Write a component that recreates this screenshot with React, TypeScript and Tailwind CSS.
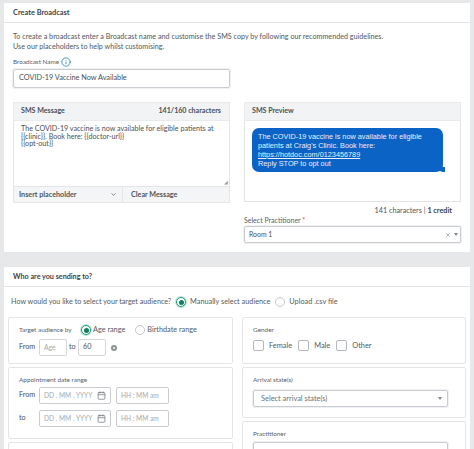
import { Info, ChevronDown, Calendar, X } from "lucide-react";

const Radio = ({ on, label, gap = "gap-[4px]" }: { on?: boolean; label: string; gap?: string }) => (
  <div className={`flex items-center ${gap}`}>
    <span
      className={`flex h-[10px] w-[10px] items-center justify-center rounded-full border bg-white ${
        on ? "border-[#1f9d7a] ring-1 ring-[#bfe3d8]" : "border-[#c4c8cc]"
      }`}
    >
      {on && <span className="h-[5px] w-[5px] rounded-full bg-[#0f7f5f]"></span>}
    </span>
    <span className="whitespace-nowrap text-[7.3px] text-[#555b61]">{label}</span>
  </div>
);

const Check = ({ label }: { label: string }) => (
  <div className="flex items-center gap-[5px]">
    <span className="h-[11px] w-[11px] rounded-[2px] border border-[#b4b8bc] bg-white"></span>
    <span className="text-[7.4px] text-[#555b61]">{label}</span>
  </div>
);

const DateRow = ({ label }: { label: string }) => (
  <div className="flex items-center">
    <span className="w-[20px] text-[7.2px] text-[#4a5056]">{label}</span>
    <div className="flex h-[17px] w-[72px] items-center justify-between rounded-[2px] border border-[#c8ccd0] pl-[4px] pr-[4px] text-[6.6px] whitespace-nowrap text-[#a4a9ae]">
      DD . MM . YYYY
      <Calendar size={9} className="shrink-0 text-[#777c81]" />
    </div>
    <div className="ml-[5px] flex h-[17px] w-[53px] items-center rounded-[2px] border border-[#c8ccd0] pl-[4px] text-[6.6px] whitespace-nowrap text-[#a4a9ae]">
      HH : MM am
    </div>
  </div>
);

export default function App() {
  return (
    <div className="h-[449px] w-[474px] overflow-hidden bg-[#e6e8ea] pl-[4px] pr-[4px] pt-[3px] font-['Lato',sans-serif] text-[7.2px] text-[#4a5056]">
      <div className="h-[249px] bg-white">
        <div className="flex h-[20px] items-center border-b border-[#e3e5e7] pl-[9px] pt-[1px] text-[7.4px] font-bold text-[#3d4349]">
          Create Broadcast
        </div>
        <div className="pl-[9px] pr-[9px] pt-[9px]">
          <p className="leading-[9.5px] text-[#51575d]">
            To create a broadcast enter a Broadcast name and customise the SMS copy by following our recommended guidelines.
            <br />
            Use our placeholders to help whilst customising.
          </p>
          <div className="mt-[6px] flex h-[10px] items-center gap-[2px] text-[6.4px] text-[#5a6066]">
            Broadcast Name
            <Info size={10} className="text-[#2f7fc1]" />
          </div>
          <div className="mt-[2px] flex h-[19px] w-[217px] items-center rounded-[2px] border border-[#c8ccd0] pl-[5px] text-[7.3px] text-[#4a5056] shadow-[0_0_0_1px_#eef0f1]">
            COVID-19 Vaccine Now Available
          </div>
          <div className="mt-[14px] flex gap-[14px]">
            <div className="w-[217px]">
              <div className="flex h-[19px] items-center justify-between border border-[#e8eaeb] bg-[#f2f3f4] pl-[7px] pr-[8px] text-[7.1px] font-bold text-[#4a5056]">
                <span>SMS Message</span>
                <span>141/160 characters</span>
              </div>
              <div className="relative h-[65px] border-l border-r border-[#e3e5e7] pl-[7px] pr-[8px] pt-[4px] text-[7.15px] leading-[7.5px] text-[#4a5056]">
                The COVID-19 vaccine is now available for eligible patients at
                <br />
                {"{{clinic}}. Book here: {{doctor-url}}"}
                <br />
                {"{{opt-out}}"}
                <span className="absolute bottom-[1px] right-[1px] text-[5px] leading-none text-[#9a9ea3]">◢</span>
              </div>
              <div className="flex h-[17px] items-center border border-[#e3e5e7] bg-[#f4f5f6] text-[7.2px] font-bold text-[#4f555b]">
                <div className="flex w-[109px] items-center justify-between border-r border-[#e3e5e7] pl-[5px] pr-[5px] leading-[15px]">
                  Insert placeholder
                  <ChevronDown size={7} strokeWidth={3} className="text-[#7a7f84]" />
                </div>
                <span className="pl-[8px] leading-[15px]">Clear Message</span>
              </div>
            </div>
            <div className="w-[217px]">
              <div className="flex h-[19px] items-center border border-[#e8eaeb] bg-[#f2f3f4] pl-[7px] text-[7.1px] font-bold text-[#4a5056]">
                SMS Preview
              </div>
              <div className="h-[81px] border-b border-l border-r border-[#e3e5e7] pl-[7px] pt-[7px]">
                <div className="relative h-[44px] w-[191px] rounded-[7px] bg-[#0b63c5] pl-[6px] pt-[4px] font-['Liberation_Sans',sans-serif] text-[7.3px] leading-[9px] text-[#e8f0fa]">
                  The COVID-19 vaccine is now available for eligible
                  <br />
                  patients at Craig's Clinic. Book here:
                  <br />
                  <span className="underline">https://hotdoc.com/0123456789</span>
                  <br />
                  Reply STOP to opt out
                  <span className="absolute bottom-0 right-[-2px] h-[5px] w-[7px] rounded-bl-[5px] bg-[#0b63c5]"></span>
                </div>
              </div>
              <div className="mt-[4px] pr-[9px] text-right text-[7.25px] leading-[10px] text-[#51575d]">
                141 characters | <b className="font-bold text-[#3d4349]">1 credit</b>
              </div>
              <div className="text-[7px] leading-[9px] text-[#5a6066]">
                Select Practitioner <span className="text-[#d9534f]">*</span>
              </div>
              <div className="mt-[1px] flex h-[17px] items-center justify-between rounded-[2px] border border-[#c8ccd0] pl-[4px] pr-[2px] text-[6.9px] text-[#4a5056] shadow-[0_0_0_1px_#eef0f1]">
                Room 1
                <span className="flex items-center gap-[3px] text-[#80858a]">
                  <X size={6} strokeWidth={2.5} />
                  <span className="h-0 w-0 border-x-[2px] border-t-[3px] border-x-transparent border-t-[#80858a]"></span>
                </span>
              </div>
            </div>
          </div>
        </div>
      </div>

      <div className="mt-[15px] bg-white">
        <div className="flex h-[20px] items-center border-b border-[#e3e5e7] pl-[9px] pt-[1px] text-[7.2px] font-bold text-[#3d4349]">
          Who are you sending to?
        </div>
        <div className="flex h-[30px] items-center gap-[5px] pl-[7px] text-[7.2px] text-[#555b61]">
          How would you like to select your target audience?
          <Radio on label="Manually select audience" />
          <Radio label="Upload .csv file" />
        </div>
        <div className="flex gap-[9px] pl-[4px]">
          <div className="flex w-[225px] flex-col gap-[3px]">
            <div className="h-[47px] rounded-[2px] border border-[#e3e5e7] pl-[10px] pt-[6px]">
              <div className="flex h-[12px] items-center">
                <span className="w-[62px] text-[6.4px] text-[#5a6066]">Target audience by</span>
                <Radio on gap="gap-[2px]" label="Age range" />
                <span className="w-[10px]"></span>
                <Radio gap="gap-[2px]" label="Birthdate range" />
              </div>
              <div className="mt-[3px] flex items-center">
                <span className="w-[20px] text-[7.2px] text-[#4a5056]">From</span>
                <span className="flex h-[17px] w-[28px] items-center rounded-[2px] border border-[#d5d8db] pl-[4px] text-[6.8px] text-[#a4a9ae]">
                  Age
                </span>
                <span className="ml-[2px] w-[9px] text-[7.2px]">to</span>
                <span className="flex h-[17px] w-[28px] items-center rounded-[2px] border border-[#d5d8db] pl-[4px] text-[7.2px] text-[#4a5056]">
                  60
                </span>
                <span className="ml-[5px] flex h-[6px] w-[6px] items-center justify-center rounded-full bg-[#8e9398]">
                  <span className="h-[2px] w-[2px] rounded-full bg-white"></span>
                </span>
              </div>
            </div>
            <div className="h-[72px] rounded-[2px] border border-[#e3e5e7] pl-[10px] pt-[7px]">
              <div className="text-[6.4px] leading-[10px] text-[#5a6066]">Appointment date range</div>
              <div className="mt-[2px] flex flex-col gap-[6px]">
                <DateRow label="From" />
                <DateRow label="to" />
              </div>
            </div>
            <div className="h-[30px] rounded-[2px] border border-[#e3e5e7]"></div>
          </div>
          <div className="flex w-[224px] flex-col gap-[3px]">
            <div className="h-[47px] rounded-[2px] border border-[#e3e5e7] pl-[10px] pt-[7px]">
              <div className="text-[6.4px] leading-[10px] text-[#5a6066]">Gender</div>
              <div className="mt-[5px] flex gap-[6px]">
                <Check label="Female" />
                <Check label="Male" />
                <Check label="Other" />
              </div>
            </div>
            <div className="h-[51px] rounded-[2px] border border-[#e3e5e7] pl-[10px] pt-[7px]">
              <div className="text-[6.4px] leading-[10px] text-[#5a6066]">Arrival state(s)</div>
              <div className="mt-[5px] flex h-[17px] w-[195px] items-center justify-between rounded-[2px] border border-[#c8ccd0] pl-[7px] pr-[5px] text-[7.4px] text-[#6a7076] shadow-[0_0_0_1px_#eef0f1]">
                Select arrival state(s)
                <span className="h-0 w-0 border-x-[2px] border-t-[3px] border-x-transparent border-t-[#80858a]"></span>
              </div>
            </div>
            <div className="h-[40px] rounded-[2px] border border-[#e3e5e7] pl-[10px] pt-[7px]">
              <div className="text-[6.4px] leading-[10px] text-[#5a6066]">Practitioner</div>
              <div className="mt-[3px] h-[17px] w-[195px] rounded-[2px] border border-[#c8ccd0] shadow-[0_0_0_1px_#eef0f1]"></div>
            </div>
          </div>
        </div>
      </div>
    </div>
  );
}
